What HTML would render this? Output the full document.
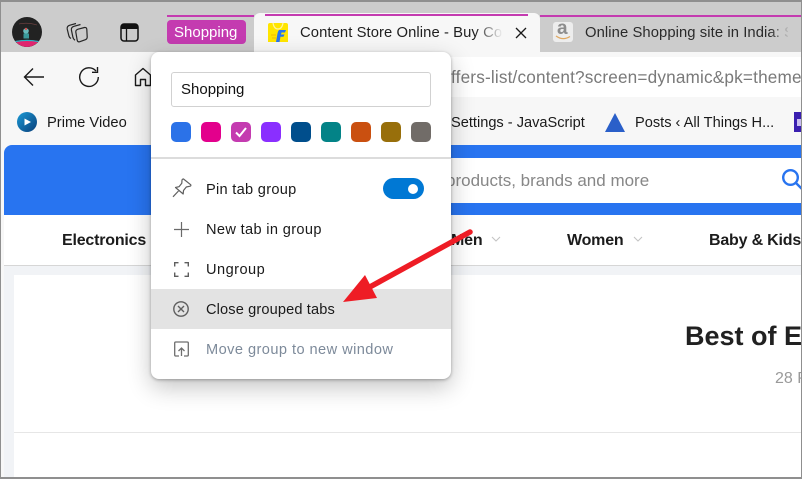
<!DOCTYPE html>
<html><head><meta charset="utf-8"><style>
html,body{margin:0;padding:0}
body{width:802px;height:479px;overflow:hidden;position:relative;background:#fff;font-family:"Liberation Sans",sans-serif;color:#1a1a1a}
.a{position:absolute}
.t{position:absolute;white-space:nowrap;line-height:20px}
.sw{position:absolute;top:122px;width:20px;height:20px;border-radius:5px}
.r{font-size:14.6px;left:206px}
.nav{font-size:16px;font-weight:bold;top:230px;color:#1c1c1c;letter-spacing:-.2px}
</style></head><body>
<!-- tab strip -->
<div class="a" style="left:0;top:0;width:802px;height:52px;background:#ccc"></div>
<div class="a" style="left:0;top:0;width:802px;height:2px;background:#8f8f8f"></div>
<div class="a" style="left:167px;top:15px;width:87px;height:2px;background:#c43bb0"></div>
<div class="a" style="left:540px;top:15px;width:262px;height:2px;background:#c43bb0"></div>
<!-- profile -->
<svg class="a" style="left:12px;top:17px" width="30" height="30" viewBox="0 0 30 30">
<circle cx="15" cy="15" r="15" fill="#222"/>
<path d="M3.2 24 Q15 22 26.8 24 Q22 30 15 30 Q8 30 3.2 24Z" fill="#e0246e"/>
<path d="M3.2 24 Q15 21.5 26.8 24 L26 25 Q15 23 4 25Z" fill="#27b6c8"/>
<circle cx="14" cy="14" r="2.8" fill="#6bb"/><rect x="11.5" y="16.5" width="5.5" height="5" fill="#3a9a9a"/><circle cx="14" cy="12" r="1.2" fill="#c55"/>
<path d="M7 7 Q15 5 25 8" stroke="#744" stroke-width=".6" fill="none"/>
</svg>
<!-- collections icon -->
<svg class="a" style="left:66px;top:22px" width="22" height="22" viewBox="0 0 22 22" fill="none" stroke="#262626" stroke-width="1.2" stroke-linejoin="round">
<path d="M10 1.5 L3.5 3.3 Q.8 4.2 1.2 7 L2.8 13.5 Q3.2 15.5 5 16.5"/>
<path d="M14.5 2.5 L8 4.3 Q5 5.2 5.4 8 L6.8 14.8 Q7.2 17 9 18.2"/>
<path d="M12 7.2 L18.5 5.5 Q20.5 5.2 20.8 7.2 L21.2 15 Q21.2 17 19.4 17.7 L13.5 19.8 Q11.6 20.2 11.2 18.3 L9.8 10 Q9.6 8 12 7.2Z"/>
</svg>
<!-- vertical tabs icon -->
<svg class="a" style="left:120px;top:23px" width="19" height="19" viewBox="0 0 19 19">
<rect x="1" y="1" width="17" height="17" rx="3" fill="none" stroke="#111" stroke-width="1.5"/>
<path d="M1 4 Q1 1 4 1 H15 Q18 1 18 4 V6 H1Z" fill="#111"/>
<path d="M6.5 6 V18" stroke="#111" stroke-width="1.3"/>
</svg>
<!-- group chip -->
<div class="a" style="left:167px;top:20px;width:79px;height:24px;background:#c43bb0;border-radius:4px"></div>
<div class="t" id="shop" style="left:174px;top:22.5px;font-size:15px;color:#fff">Shopping</div>
<!-- active tab -->
<div class="a" style="left:254px;top:13px;width:286px;height:39px;background:#f7f7f7;border-radius:6px 6px 0 0"></div>
<div class="a" style="left:265px;top:14px;width:263px;height:2px;background:#c43bb0"></div>
<svg class="a" style="left:268px;top:22px" width="20" height="20" viewBox="0 0 20 20">
<path d="M0 3 Q0 1 2 1 H18 Q20 1 20 3 V20 H0Z" fill="#ffe500"/>
<path d="M5 1 Q6 7 10 7 Q14 7 15 1" fill="none" stroke="#fff3a0" stroke-width="1.2"/>
<path d="M11 8 L18 8 L17 10.5 L13.5 10.5 L13 12.5 L16.5 12.5 L15.5 14.8 L12.5 14.8 L11.5 20 L8 20 L9.5 11.5Q10 9 11 8Z" fill="#2874f0"/>
<path d="M3 13 H8 M4 16 H8" stroke="#f5c400" stroke-width="1.2"/>
</svg>
<div class="t" id="t1" style="left:300px;top:22.5px;font-size:14.8px;letter-spacing:.08px;width:203px;overflow:hidden;color:#1f1f1f">Content Store Online - Buy Content</div>
<div class="a" style="left:475px;top:20px;width:28px;height:24px;background:linear-gradient(90deg,rgba(247,247,247,0),#f7f7f7)"></div>
<svg class="a" style="left:515px;top:27px" width="12" height="12" viewBox="0 0 12 12"><path d="M1 1 L11 11 M11 1 L1 11" stroke="#1a1a1a" stroke-width="1.3"/></svg>
<!-- amazon tab -->
<div class="a" style="left:553px;top:22px;width:20px;height:20px;background:#ededed;border-radius:3px"></div>
<div class="t" style="left:557px;top:18.5px;font-size:19px;font-weight:bold;color:#8d8d8d">a</div>
<svg class="a" style="left:555px;top:35px" width="16" height="6" viewBox="0 0 16 6"><path d="M1 1 Q8 6 15 1.5" fill="none" stroke="#e0a860" stroke-width="1.3"/></svg>
<div class="t" id="t2" style="left:585px;top:22.5px;font-size:14.8px;letter-spacing:.08px;width:203px;overflow:hidden;color:#2a2a2a">Online Shopping site in India: Shop</div>
<div class="a" style="left:770px;top:20px;width:20px;height:24px;background:linear-gradient(90deg,rgba(204,204,204,0),#ccc)"></div>
<!-- toolbar -->
<div class="a" style="left:0;top:52px;width:802px;height:93px;background:#f7f7f7"></div>
<div class="a" style="left:440px;top:57px;width:362px;height:40px;background:#fff"></div>
<svg class="a" style="left:23px;top:67px" width="22" height="20" viewBox="0 0 22 20" fill="none" stroke="#1a1a1a" stroke-width="1.4"><path d="M21 10 H2 M10 1.5 L1.5 10 L10 18.5"/></svg>
<svg class="a" style="left:78px;top:66px" width="22" height="22" viewBox="0 0 22 22" fill="none" stroke="#1a1a1a" stroke-width="1.4"><path d="M18 5 A9.3 9.3 0 1 0 20.3 11"/><path d="M19.5 1 V6.3 H14"/></svg>
<svg class="a" style="left:134px;top:67px" width="18" height="20" viewBox="0 0 18 20" fill="none" stroke="#1a1a1a" stroke-width="1.4" stroke-linejoin="round"><path d="M1.5 8 L9 1.5 L16.5 8 V18.5 H11.5 V12.5 H6.5 V18.5 H1.5Z"/></svg>
<div class="t" id="url" style="left:451px;top:67px;font-size:17.2px;color:#7a7a7a;letter-spacing:.17px;width:351px;overflow:hidden">ffers-list/content?screen=dynamic&amp;pk=theme</div>
<!-- bookmarks -->
<svg class="a" style="left:17px;top:112px" width="20" height="20" viewBox="0 0 20 20"><defs><linearGradient id="g" x1="0" y1="0" x2="1" y2="1"><stop offset="0" stop-color="#1a9ad6"/><stop offset="1" stop-color="#0a3f7a"/></linearGradient></defs><circle cx="10" cy="10" r="10" fill="url(#g)"/><path d="M7.5 6.5 L14 10 L7.5 13.5Z" fill="#fff"/></svg>
<div class="t" id="b1" style="left:47px;top:112.5px;font-size:14.7px;color:#1a1a1a">Prime Video</div>
<div class="t" id="b2" style="left:451px;top:112.5px;font-size:14.6px;color:#1a1a1a">Settings - JavaScript</div>
<svg class="a" style="left:605px;top:112px" width="20" height="20" viewBox="0 0 20 20"><path d="M10 1 L20 20 H0Z" fill="#2a5fc9"/></svg>
<div class="t" id="b3" style="left:635px;top:112.5px;font-size:14.6px;color:#1a1a1a">Posts ‹ All Things H...</div>
<div class="a" style="left:794px;top:112px;width:8px;height:20px;background:#3a1fb0"></div>
<div class="a" style="left:797px;top:119px;width:5px;height:7px;background:#c9bdf0"></div>
<!-- page -->
<div class="a" style="left:0;top:145px;width:802px;height:334px;background:#f7f7f7"></div>
<div class="a" style="left:4px;top:145px;width:798px;height:70px;background:#2874f0;border-radius:8px 0 0 0"></div>
<div class="a" style="left:440px;top:158px;width:362px;height:45px;background:#fff"></div>
<div class="t" id="sr" style="left:446px;top:171px;font-size:17px;color:#878787">products, brands and more</div>
<svg class="a" style="left:781px;top:168px" width="21" height="22" viewBox="0 0 21 22" fill="none" stroke="#2874f0" stroke-width="2.4"><circle cx="9.5" cy="9.5" r="7.3"/><path d="M15 15 L22 22"/></svg>
<div class="a" style="left:4px;top:215px;width:798px;height:50px;background:#fff"></div>
<div class="a" style="left:4px;top:265px;width:798px;height:1px;background:#d6d6d6"></div>
<div class="a" style="left:4px;top:266px;width:798px;height:9px;background:#f1f3f6"></div>
<div class="a" style="left:4px;top:275px;width:10px;height:202px;background:#f1f3f6"></div>
<div class="a" style="left:14px;top:275px;width:788px;height:202px;background:#fff"></div>
<div class="a" style="left:14px;top:432px;width:788px;height:1px;background:#e6e6e6"></div>
<div class="t nav" id="n1" style="left:62px;top:231px">Electronics</div>
<div class="t nav" id="n2" style="left:451px;top:231px">Men</div>
<div class="t nav" id="n3" style="left:567px;top:231px">Women</div>
<div class="t nav" id="n4" style="left:709px;top:231px">Baby &amp; Kids</div>
<svg class="a" style="left:491px;top:236px" width="10" height="6" viewBox="0 0 10 6" fill="none" stroke="#c4c4c4" stroke-width="1.1"><path d="M1 1 L5 5 L9 1"/></svg>
<svg class="a" style="left:633px;top:236px" width="10" height="6" viewBox="0 0 10 6" fill="none" stroke="#c4c4c4" stroke-width="1.1"><path d="M1 1 L5 5 L9 1"/></svg>
<div class="t" id="h" style="left:685px;top:322px;width:116px;overflow:hidden;font-size:27px;line-height:28px;font-weight:bold;color:#212121">Best of Electronics</div>
<div class="t" style="left:775px;top:369px;width:26px;overflow:hidden;font-size:16px;color:#9a9a9a">28 Products</div>
<!-- frame edges -->
<div class="a" style="left:0;top:0;width:1px;height:479px;background:#8f8f8f"></div>
<div class="a" style="left:0;top:477px;width:802px;height:2px;background:#8f8f8f"></div>
<div class="a" style="left:801px;top:0;width:1px;height:479px;background:#8f8f8f"></div>
<!-- menu -->
<div class="a" style="left:151px;top:52px;width:300px;height:327px;background:#fff;border-radius:8px;box-shadow:0 8px 24px rgba(0,0,0,.24),0 1px 3px rgba(0,0,0,.3)"></div>
<div class="a" style="left:171px;top:72px;width:258px;height:33px;border:1px solid #d1d1d1;border-radius:3px"></div>
<div class="t" id="inp" style="left:181px;top:80px;font-size:15px;color:#111">Shopping</div>
<div class="sw" style="left:171px;background:#2b72e8"></div>
<div class="sw" style="left:201px;background:#e3008c"></div>
<div class="sw" style="left:231px;background:#c43bb0"></div>
<svg class="a" style="left:233px;top:124px" width="16" height="16" viewBox="0 0 16 16"><path d="M3 8.5 L6.5 12 L13 4" fill="none" stroke="#fff" stroke-width="2"/></svg>
<div class="sw" style="left:261px;background:#8a2fff"></div>
<div class="sw" style="left:291px;background:#004e8c"></div>
<div class="sw" style="left:321px;background:#038387"></div>
<div class="sw" style="left:351px;background:#ca5010"></div>
<div class="sw" style="left:381px;background:#986f0b"></div>
<div class="sw" style="left:411px;background:#716c68"></div>
<div class="a" style="left:151px;top:157px;width:300px;height:2px;background:#dcdcdc"></div>
<svg class="a" style="left:172px;top:178px" width="20" height="20" viewBox="0 0 20 20" fill="none" stroke="#5f5f5f" stroke-width="1.2" stroke-linejoin="round"><path d="M11.5 1 L18.8 6.8 Q19.2 7.8 18 8.2 L14.3 9 L11.5 12.5 L11.2 16 L3.5 9.5 L7 8.7 L9.8 5.2 L10 2 Q10.5 .8 11.5 1Z"/><path d="M6.5 13 L1 18.8"/></svg>
<div class="t r" id="m1" style="top:180px;letter-spacing:.29px;color:#1a1a1a">Pin tab group</div>
<div class="a" style="left:383px;top:178px;width:41px;height:21px;border-radius:11px;background:#0078d4"></div>
<div class="a" style="left:408px;top:184px;width:10px;height:10px;border-radius:50%;background:#fff"></div>
<svg class="a" style="left:174px;top:222px" width="15" height="15" viewBox="0 0 15 15"><path d="M7.5 0 V15 M0 7.5 H15" stroke="#6a6a6a" stroke-width="1.2"/></svg>
<div class="t r" id="m2" style="top:220px;letter-spacing:.34px;color:#1a1a1a">New tab in group</div>
<svg class="a" style="left:174px;top:262px" width="15" height="15" viewBox="0 0 15 15" fill="none" stroke="#5f5f5f" stroke-width="1.4"><path d="M.7 4.5 V.7 H4.5 M10.5 .7 H14.3 V4.5 M14.3 10.5 V14.3 H10.5 M4.5 14.3 H.7 V10.5"/></svg>
<div class="t r" id="m3" style="top:260px;letter-spacing:.46px;color:#1a1a1a">Ungroup</div>
<div class="a" style="left:151px;top:289px;width:300px;height:40px;background:#e3e3e3"></div>
<svg class="a" style="left:173px;top:301px" width="16" height="16" viewBox="0 0 16 16" fill="none" stroke="#5f5f5f" stroke-width="1.4"><circle cx="8" cy="8" r="7.2"/><path d="M5 5 L11 11 M11 5 L5 11"/></svg>
<div class="t r" id="m4" style="top:300px;letter-spacing:.13px;color:#1a1a1a">Close grouped tabs</div>
<svg class="a" style="left:174px;top:341px" width="15" height="16" viewBox="0 0 15 16" fill="none" stroke="#6e6e6e" stroke-width="1.3"><path d="M5 15 H1.8 Q.7 15 .7 14 V2 Q.7 1 1.8 1 H13.2 Q14.3 1 14.3 2 V14 Q14.3 15 13.2 15 H10"/><path d="M7.5 15 V7 M4.5 10 L7.5 7 L10.5 10"/></svg>
<div class="t r" id="m5" style="top:340px;letter-spacing:.44px;color:#7d8a9a">Move group to new window</div>
<!-- arrow -->
<svg class="a" style="left:0;top:0;pointer-events:none" width="802" height="479" viewBox="0 0 802 479">
<path d="M470 232 L368 288" stroke="#ee1c25" stroke-width="5.5" stroke-linecap="round"/>
<path d="M343 302 L365 275 L377 298Z" fill="#ee1c25"/>
</svg>
</body></html>
